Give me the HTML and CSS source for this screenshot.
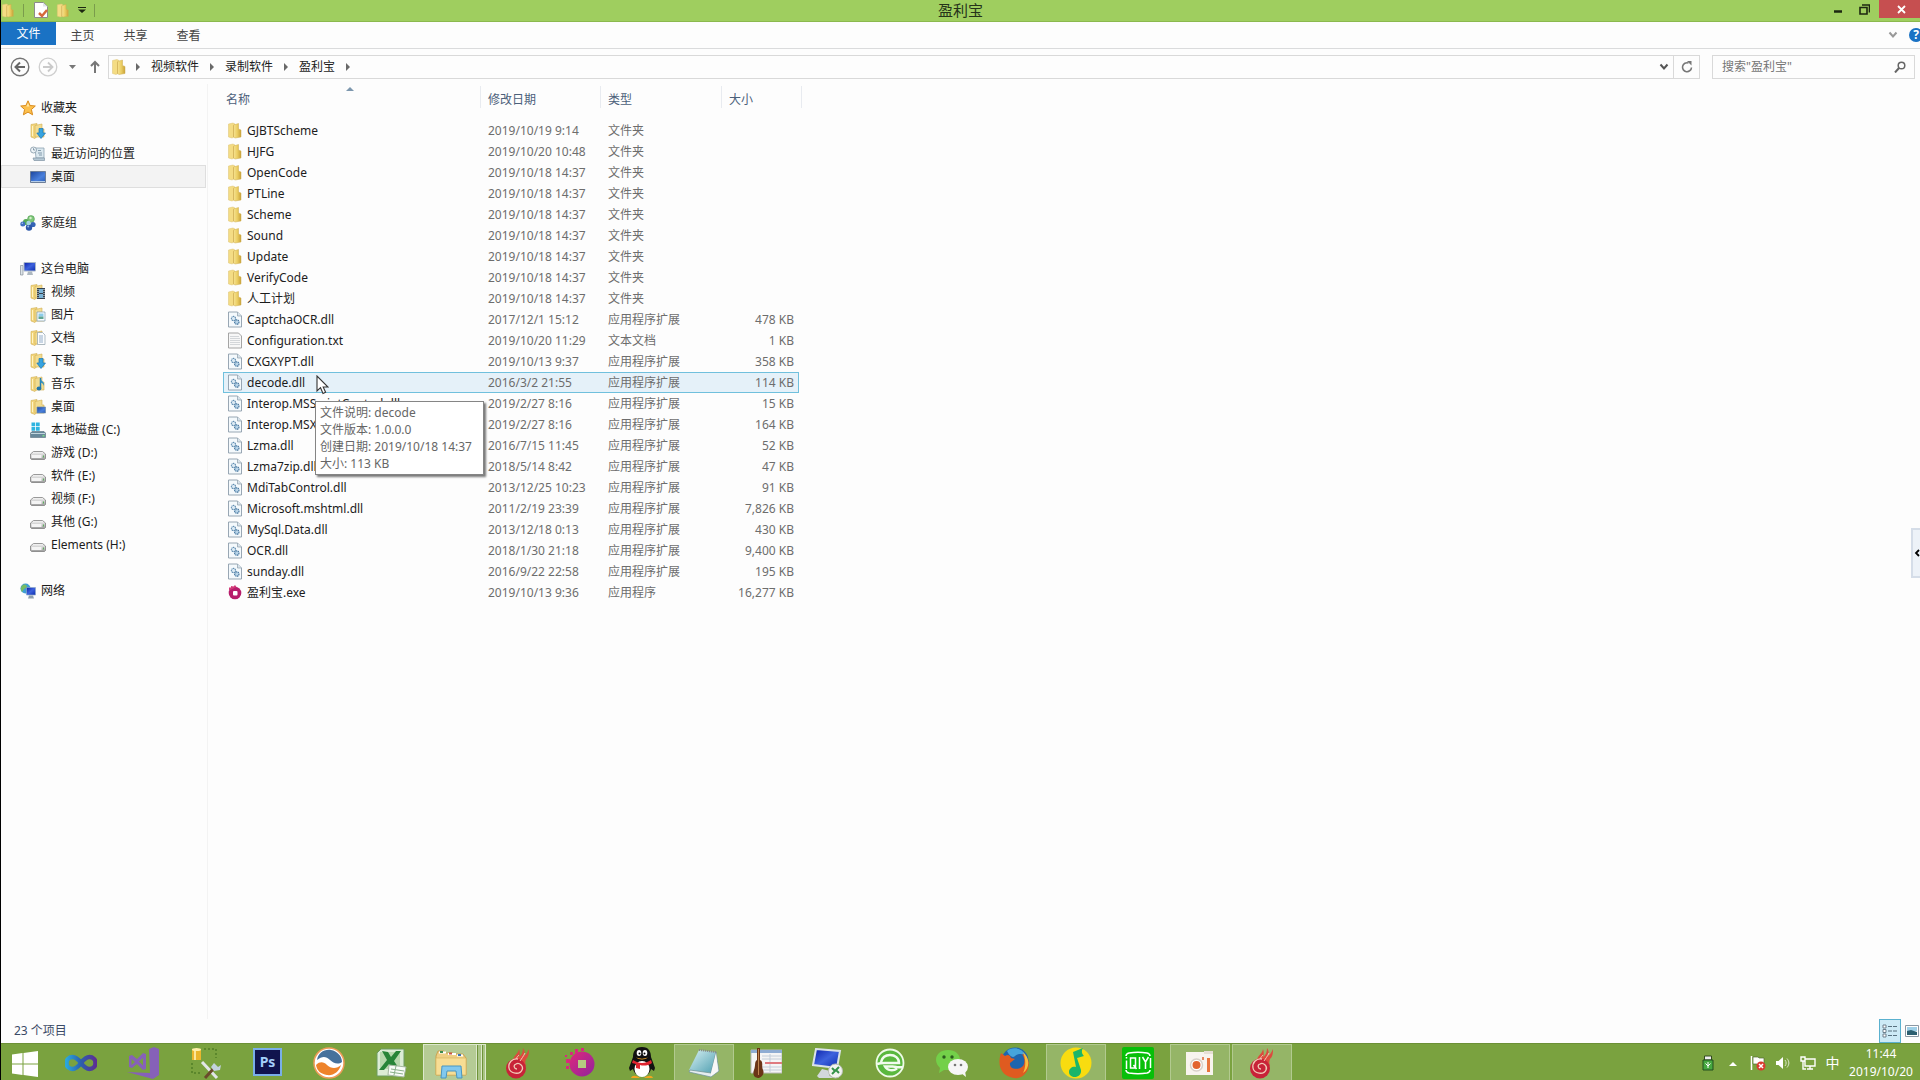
FILE: index.html
```html
<!DOCTYPE html>
<html lang="zh-CN">
<head>
<meta charset="utf-8">
<title>盈利宝</title>
<link rel="stylesheet" href="styles.css">
</head>
<body>
<svg class="defs" aria-hidden="true">
  <defs>
    <linearGradient id="gold" x1="0" x2="1"><stop offset="0" stop-color="#f7e392"/><stop offset=".5" stop-color="#ebce64"/><stop offset="1" stop-color="#c9a238"/></linearGradient>
    <linearGradient id="blueScreen" x1="0" x2="1" y2="1"><stop offset="0" stop-color="#0a1fa8"/><stop offset=".5" stop-color="#3d62dd"/><stop offset="1" stop-color="#0b2cae"/></linearGradient>
    <linearGradient id="deskScreen" x1="0" x2="1" y2="1"><stop offset="0" stop-color="#1b449c"/><stop offset=".6" stop-color="#4a80dc"/><stop offset="1" stop-color="#285cb8"/></linearGradient>
    <linearGradient id="infinity" x1="0" x2="1"><stop offset="0" stop-color="#2aa7dc"/><stop offset=".5" stop-color="#2c5fae"/><stop offset="1" stop-color="#5c2f93"/></linearGradient>
    <linearGradient id="magenta" x1="0" x2="1" y2="1"><stop offset="0" stop-color="#e0287a"/><stop offset="1" stop-color="#8f259e"/></linearGradient>
    <linearGradient id="page" x1="0" x2="1" y2="1"><stop offset="0" stop-color="#d9f1f4"/><stop offset="1" stop-color="#4f9fb0"/></linearGradient>
    <linearGradient id="drive" x1="0" x2="0" y2="1"><stop offset="0" stop-color="#fafafa"/><stop offset="1" stop-color="#9b9b9b"/></linearGradient>
  </defs>
  <symbol id="folder" viewBox="0 0 16 16"><path d="M1.500 1.500L6 .5l2 1V14l-3 1.500-3.500-1z" fill="#f4dc84" stroke="#dcc272" stroke-width=".5"/><path d="M6.500 2.500l5-1.500v5.500l2.500 1v7L8 15.500l-1.500-1z" fill="url(#gold)" stroke="#cfae50" stroke-width=".5"/><path d="M6.500 3v11.500" stroke="#d2b25a" stroke-width=".7"/></symbol>
  <symbol id="wide-folder" viewBox="0 0 16 16"><path d="M1 1.500l6-1v13L5 15.500l-4-1.500z" fill="#f3d67e" stroke="#d0ae52" stroke-width=".6"/><path d="M5 2.500L12 1v5h2v8H5z" fill="#f2dc90" stroke="#d0ae52" stroke-width=".6"/><path d="M2.500 3v10" stroke="#fff4c5"/></symbol>
  <symbol id="folder-down" viewBox="0 0 16 16"><use href="#wide-folder"/><path d="M9 5.500h4V10h2.500L11 15.500 6.800 10H9z" fill="#36a3df" stroke="#1b77b4" stroke-width=".7"/></symbol>
  <symbol id="folder-video" viewBox="0 0 16 16"><use href="#wide-folder"/><path d="M7 4h8v11H7z" fill="#35424f"/><path d="M9 5h4v4H9zM9 10h4v4H9z" fill="#7ab3d6"/><path d="M8 5v10M14 5v10" stroke="#e8eef3" stroke-dasharray="1 1"/></symbol>
  <symbol id="folder-image" viewBox="0 0 16 16"><use href="#wide-folder"/><path d="M7 5h8v9H7z" fill="#f9fdff" stroke="#7d9aac" stroke-width=".7"/><path d="M8.500 6.500h5v3h-5z" fill="#8ccbe9"/><path d="M8.500 9.500h5V12h-5z" fill="#5fa593"/></symbol>
  <symbol id="folder-doc" viewBox="0 0 16 16"><use href="#wide-folder"/><path d="M7.500 2.500h5L15 5v9.500H7.500z" fill="#fbfdff" stroke="#8fa0ae" stroke-width=".7"/><path d="M9 6h4M9 8h4M9 10h4M9 12h4" stroke="#7f9bbb" stroke-width=".8"/></symbol>
  <symbol id="folder-music" viewBox="0 0 16 16"><use href="#wide-folder"/><path d="M10.500 2v10" stroke="#287fb3" stroke-width="1.500"/><path d="M10.500 2c0 3 4.500 3.500 3.500 8-.5-2-1.500-3-3.500-3.500z" fill="#2f90c4"/><ellipse cx="9" cy="12.500" rx="2.400" ry="2" fill="#2476aa"/></symbol>
  <symbol id="folder-desktop" viewBox="0 0 16 16"><use href="#wide-folder"/><path d="M7 8h8.500v6H7z" fill="url(#deskScreen)" stroke="#6f8cab" stroke-width=".7"/></symbol>
  <symbol id="star" viewBox="0 0 16 16"><path d="M8 .8l2.100 4.700 5.200.5-3.900 3.500 1.200 5.300L8 12.100l-4.600 2.700 1.200-5.300L.7 6l5.200-.5z" fill="#fcc04d" stroke="#d98b1c"/><path d="M8 3l1.400 3.400-3 .2z" fill="#ffe7a8"/></symbol>
  <symbol id="recent" viewBox="0 0 16 16"><path d="M5 2h9v10H6z" fill="#dbe8ef" stroke="#8da2b1" stroke-width=".8"/><circle cx="3.500" cy="4" r="3" fill="#eef4f7" stroke="#8296a5" stroke-width=".8"/><path d="M3.500 2.200V4H5M8 4.500h3M8 7h4M9 9h3" stroke="#6d8799" fill="none" stroke-width=".8"/><path d="M3 12h11.500v2.500H4z" fill="#b5c8d4" stroke="#8094a3" stroke-width=".7"/></symbol>
  <symbol id="desktop" viewBox="0 0 16 16"><path d="M.5 2.500h15v11H.5z" fill="url(#deskScreen)" stroke="#6c7e99"/><path d="M1 12.500h14" stroke="#b5cde8"/></symbol>
  <symbol id="homegroup" viewBox="0 0 16 16"><circle cx="6" cy="7" r="3" fill="#54a955"/><circle cx="11" cy="4" r="3.400" fill="#7fc77a" stroke="#4c9a4e" stroke-width=".6"/><circle cx="2.800" cy="9" r="2.500" fill="#3d6fc0"/><circle cx="13" cy="9.500" r="2.600" fill="#3564b5"/><circle cx="9" cy="12.500" r="3.200" fill="#2d58aa"/><circle cx="8.500" cy="8" r="2.200" fill="#a2d6df"/><circle cx="10.500" cy="3" r="1.200" fill="#d7f0cc"/><circle cx="8.200" cy="11.500" r="1" fill="#8fb4e6"/><circle cx="2.300" cy="8.300" r=".8" fill="#a4c4ec"/></symbol>
  <symbol id="pc" viewBox="0 0 16 16"><path d="M.5 4.500h2.500V14H.5z" fill="#dce3e8" stroke="#87919a" stroke-width=".7"/><path d="M4 1.500h11.500v8.500H4z" fill="url(#blueScreen)" stroke="#aab8ca"/><path d="M8 10.500h4l1 3.500H7z" fill="#aeb8c0"/></symbol>
  <symbol id="network" viewBox="0 0 16 16"><circle cx="5.500" cy="5.500" r="5" fill="#3f9ed3"/><path d="M3 2c2-1 4 0 4 2L4 6 2 9C0 6 1 3 3 2z" fill="#77bd64"/><path d="M6.500 4.500h9V12h-9z" fill="url(#blueScreen)" stroke="#8ea8c8" stroke-width=".7"/><path d="M9 12.500h4l1 3H8z" fill="#8fa0ae"/></symbol>
  <symbol id="drive-c" viewBox="0 0 16 16"><path d="M1.500.5h3.700v3.700H1.500zM6 .5h3.700v3.700H6zM1.500 5h3.700v3.700H1.500zM6 5h3.700v3.700H6z" fill="#2fb4e0"/><path d="M2 9.500h12l1.500 1.500v4.500H.5V11z" fill="#68889a" stroke="#597080" stroke-width=".6"/><path d="M1 11.500h14" stroke="#c2d6de"/><path d="M12.500 13h2v1.500h-2z" fill="#7bdc86"/></symbol>
  <symbol id="hdd" viewBox="0 0 16 16"><path d="M3.500 6.500h9l3 2.500v4.500l-1 1h-13l-1-1V9z" fill="url(#drive)" stroke="#808080" stroke-width=".8"/><path d="M1.500 10h10v3h-10z" fill="#f4f4f4"/><path d="M13 10.500h1v2h-1z" fill="#5bb05b"/></symbol>
  <symbol id="dll" viewBox="0 0 16 16"><path d="M1.500.5h9l4 4v11h-13z" fill="#f4f9fc" stroke="#8d9dab" stroke-width=".9"/><path d="M10.500.5v4h4" fill="#d9e4ec" stroke="#8d9dab" stroke-width=".7"/><circle cx="6.500" cy="7" r="2.100" fill="#dceaf4" stroke="#5585ab" stroke-width="1.100" stroke-dasharray="1.200 .5"/><circle cx="9.800" cy="10.600" r="2.200" fill="#b9d5e9" stroke="#3f719b" stroke-width="1.100" stroke-dasharray="1.200 .5"/></symbol>
  <symbol id="txt" viewBox="0 0 16 16"><path d="M1.500.5h10l3 3v12h-13z" fill="#f7f7f7" stroke="#9b9b9b" stroke-width=".9"/><path d="M3 4h9M3 6h10M3 8h10M3 10h10M3 12h10" stroke="#c9cdd0" stroke-width=".8"/></symbol>
  <symbol id="exe" viewBox="0 0 16 16"><circle cx="8" cy="8.500" r="6.300" fill="#b81d6c"/><path d="M2 6l0-3 2 0 0-1.500 2.500.5L8 .5l1.500 2z" fill="#d23a78"/><rect x="6" y="6.500" width="4.500" height="4.500" rx="1" fill="#fff"/></symbol>
  <symbol id="crumb-arrow" viewBox="0 0 6 8"><path d="M1 0l4 4-4 4z" fill="#696969"/></symbol>
  <symbol id="chevron" viewBox="0 0 10 8"><path d="M1.500 1.500L5 5.500l3.500-4" fill="none" stroke="currentColor" stroke-width="2"/></symbol>
  <symbol id="swirl" viewBox="0 0 32 32"><path d="M11 14c0-6 5-6 6-12 1 3 1 5 0 8 3-2 4-5 4-9 2 3 2 5 1 8 2-1 3-3 5-7 0 6-1 8-3 10-1 3-1 4 0 7z" fill="#dd4a3e"/><circle cx="14" cy="21.500" r="10" fill="#c82338"/><path d="M16 12c-6-1-10 4-9 9 1 6 11 7 13 2 2-4-3-8-6-6-3 1-2 5 1 5" fill="none" stroke="#f1c9b6" stroke-width="1.300"/><path d="M18 14c2-3 3-4 5-8M14 12c1-2 2-3 3-4" stroke="#f1c9b6" fill="none"/></symbol>
</svg>

<header class="titlebar">
  <div class="quick">
    <svg class="icon-14"><use href="#folder"/></svg><i class="sep"></i>
    <button aria-label="属性"><svg width="14" height="16" viewBox="0 0 14 16"><path d="M.5.5h9l4 4v11H.5z" fill="#fff" stroke="#8c8c8c"/><path d="M9 .5v4h4.500" fill="#dfe4e8"/><path d="M5 11l3 3 5-6" fill="none" stroke="#d6683b" stroke-width="2.500"/></svg></button>
    <button aria-label="新建文件夹"><svg class="icon-14"><use href="#folder"/></svg></button>
    <button aria-label="自定义"><svg width="8" height="6" viewBox="0 0 8 6"><path d="M0 0h8v1H0zM0 2.500h8L4 6z" fill="#1c2710"/></svg></button><i class="sep"></i>
  </div>
  <h1>盈利宝</h1>
  <div class="controls">
    <button aria-label="最小化"><svg width="10" height="12" viewBox="0 0 10 12"><path d="M1 8.500h8" stroke="#1c2710" stroke-width="2.500"/></svg></button>
    <button aria-label="还原"><svg width="11" height="11" viewBox="0 0 11 11"><path d="M1 3.500h7v6.500H1zM3 1h7.500v7.500" fill="none" stroke="#1c2710" stroke-width="1.600"/></svg></button>
    <button class="close" aria-label="关闭"><svg width="9" height="9" viewBox="0 0 9 9"><path d="M1 1l7 7M8 1L1 8" stroke="#fff" stroke-width="1.800"/></svg></button>
  </div>
</header>

<nav class="ribbon">
  <button class="file">文件</button><button>主页</button><button>共享</button><button>查看</button>
  <span class="ribbon-right">
    <button aria-label="展开功能区"><svg class="chev gray"><use href="#chevron"/></svg></button>
    <button class="help" aria-label="帮助">?</button>
  </span>
</nav>

<div class="location">
  <div class="history">
    <button aria-label="后退"><svg width="20" height="20" viewBox="0 0 20 20"><circle cx="10" cy="10" r="8.800" fill="none" stroke="#757575" stroke-width="1.400"/><path d="M15 10H6M10 5.500L5.500 10l4.500 4.500" fill="none" stroke="#666" stroke-width="2"/></svg></button>
    <button aria-label="前进"><svg width="20" height="20" viewBox="0 0 20 20"><circle cx="10" cy="10" r="8.800" fill="none" stroke="#cfcfcf" stroke-width="1.300"/><path d="M5 10h9M10 5.500l4.500 4.500-4.500 4.500" fill="none" stroke="#cacaca" stroke-width="1.800"/></svg></button>
    <button class="recent" aria-label="最近位置"><svg width="7" height="4" viewBox="0 0 7 4"><path d="M0 0h7L3.500 4z" fill="#777"/></svg></button>
    <button class="up" aria-label="上移"><svg width="10" height="13" viewBox="0 0 10 13"><path d="M5 13V2M1 6l4-4 4 4" fill="none" stroke="#777" stroke-width="2"/></svg></button>
  </div>
  <div class="address">
    <svg class="icon-16"><use href="#folder"/></svg>
    <svg class="crumb-arrow"><use href="#crumb-arrow"/></svg><a href="#">视频软件</a>
    <svg class="crumb-arrow"><use href="#crumb-arrow"/></svg><a href="#">录制软件</a>
    <svg class="crumb-arrow"><use href="#crumb-arrow"/></svg><a href="#">盈利宝</a>
    <svg class="crumb-arrow"><use href="#crumb-arrow"/></svg>
    <button class="drop" aria-label="历史"><svg class="chev"><use href="#chevron"/></svg></button>
    <button class="refresh" aria-label="刷新"><svg width="12" height="12" viewBox="0 0 12 12"><path d="M10.500 6.500A4.500 4.500 0 1 1 7.500 2" fill="none" stroke="#777" stroke-width="1.600"/><path d="M6 0h4.500v4.500z" fill="#777"/></svg></button>
  </div>
  <label class="search"><input type="search" aria-label="搜索" placeholder='搜索"盈利宝"'><svg width="12" height="12" viewBox="0 0 12 12"><circle cx="7.500" cy="4.500" r="3.300" fill="none" stroke="#666" stroke-width="1.500"/><path d="M5 7l-4 4.500" stroke="#666" stroke-width="2"/></svg></label>
</div>

<div class="panes">
  <nav class="tree">
    <ul>
      <li><a href="#"><svg><use href="#star"/></svg>收藏夹</a></li>
      <li class="sub"><a href="#"><svg><use href="#folder-down"/></svg>下载</a></li>
      <li class="sub"><a href="#"><svg><use href="#recent"/></svg>最近访问的位置</a></li>
      <li class="sub current"><a href="#"><svg><use href="#desktop"/></svg>桌面</a></li>
    </ul>
    <ul><li><a href="#"><svg><use href="#homegroup"/></svg>家庭组</a></li></ul>
    <ul>
      <li><a href="#"><svg><use href="#pc"/></svg>这台电脑</a></li>
      <li class="sub"><a href="#"><svg><use href="#folder-video"/></svg>视频</a></li>
      <li class="sub"><a href="#"><svg><use href="#folder-image"/></svg>图片</a></li>
      <li class="sub"><a href="#"><svg><use href="#folder-doc"/></svg>文档</a></li>
      <li class="sub"><a href="#"><svg><use href="#folder-down"/></svg>下载</a></li>
      <li class="sub"><a href="#"><svg><use href="#folder-music"/></svg>音乐</a></li>
      <li class="sub"><a href="#"><svg><use href="#folder-desktop"/></svg>桌面</a></li>
      <li class="sub"><a href="#"><svg><use href="#drive-c"/></svg>本地磁盘 (C:)</a></li>
      <li class="sub"><a href="#"><svg><use href="#hdd"/></svg>游戏 (D:)</a></li>
      <li class="sub"><a href="#"><svg><use href="#hdd"/></svg>软件 (E:)</a></li>
      <li class="sub"><a href="#"><svg><use href="#hdd"/></svg>视频 (F:)</a></li>
      <li class="sub"><a href="#"><svg><use href="#hdd"/></svg>其他 (G:)</a></li>
      <li class="sub"><a href="#"><svg><use href="#hdd"/></svg>Elements (H:)</a></li>
    </ul>
    <ul><li><a href="#"><svg><use href="#network"/></svg>网络</a></li></ul>
  </nav>
  <main class="files">
    <table>
      <colgroup><col class="c-name"><col class="c-date"><col class="c-type"><col class="c-size"></colgroup>
      <thead><tr><th class="sorted">名称</th><th>修改日期</th><th>类型</th><th>大小</th></tr></thead>
      <tbody>
        <tr><td><svg><use href="#folder"/></svg>GJBTScheme</td><td>2019/10/19 9:14</td><td>文件夹</td><td></td></tr>
        <tr><td><svg><use href="#folder"/></svg>HJFG</td><td>2019/10/20 10:48</td><td>文件夹</td><td></td></tr>
        <tr><td><svg><use href="#folder"/></svg>OpenCode</td><td>2019/10/18 14:37</td><td>文件夹</td><td></td></tr>
        <tr><td><svg><use href="#folder"/></svg>PTLine</td><td>2019/10/18 14:37</td><td>文件夹</td><td></td></tr>
        <tr><td><svg><use href="#folder"/></svg>Scheme</td><td>2019/10/18 14:37</td><td>文件夹</td><td></td></tr>
        <tr><td><svg><use href="#folder"/></svg>Sound</td><td>2019/10/18 14:37</td><td>文件夹</td><td></td></tr>
        <tr><td><svg><use href="#folder"/></svg>Update</td><td>2019/10/18 14:37</td><td>文件夹</td><td></td></tr>
        <tr><td><svg><use href="#folder"/></svg>VerifyCode</td><td>2019/10/18 14:37</td><td>文件夹</td><td></td></tr>
        <tr><td><svg><use href="#folder"/></svg>人工计划</td><td>2019/10/18 14:37</td><td>文件夹</td><td></td></tr>
        <tr><td><svg><use href="#dll"/></svg>CaptchaOCR.dll</td><td>2017/12/1 15:12</td><td>应用程序扩展</td><td>478 KB</td></tr>
        <tr><td><svg><use href="#txt"/></svg>Configuration.txt</td><td>2019/10/20 11:29</td><td>文本文档</td><td>1 KB</td></tr>
        <tr><td><svg><use href="#dll"/></svg>CXGXYPT.dll</td><td>2019/10/13 9:37</td><td>应用程序扩展</td><td>358 KB</td></tr>
        <tr class="hover"><td><svg><use href="#dll"/></svg>decode.dll
          <div class="tooltip" role="tooltip">文件说明: decode<br>文件版本: 1.0.0.0<br>创建日期: 2019/10/18 14:37<br>大小: 113 KB</div>
          <svg class="pointer" viewBox="0 0 13 20"><path d="M1 1v15l3.500-3.300L7 18.500l2.600-1.200L7.200 12H12z" fill="#fff" stroke="#333" stroke-width="1.100"/></svg></td><td>2016/3/2 21:55</td><td>应用程序扩展</td><td>114 KB</td></tr>
        <tr><td><svg><use href="#dll"/></svg>Interop.MSScriptControl.dll</td><td>2019/2/27 8:16</td><td>应用程序扩展</td><td>15 KB</td></tr>
        <tr><td><svg><use href="#dll"/></svg>Interop.MSXML2.dll</td><td>2019/2/27 8:16</td><td>应用程序扩展</td><td>164 KB</td></tr>
        <tr><td><svg><use href="#dll"/></svg>Lzma.dll</td><td>2016/7/15 11:45</td><td>应用程序扩展</td><td>52 KB</td></tr>
        <tr><td><svg><use href="#dll"/></svg>Lzma7zip.dll</td><td>2018/5/14 8:42</td><td>应用程序扩展</td><td>47 KB</td></tr>
        <tr><td><svg><use href="#dll"/></svg>MdiTabControl.dll</td><td>2013/12/25 10:23</td><td>应用程序扩展</td><td>91 KB</td></tr>
        <tr><td><svg><use href="#dll"/></svg>Microsoft.mshtml.dll</td><td>2011/2/19 23:39</td><td>应用程序扩展</td><td>7,826 KB</td></tr>
        <tr><td><svg><use href="#dll"/></svg>MySql.Data.dll</td><td>2013/12/18 0:13</td><td>应用程序扩展</td><td>430 KB</td></tr>
        <tr><td><svg><use href="#dll"/></svg>OCR.dll</td><td>2018/1/30 21:18</td><td>应用程序扩展</td><td>9,400 KB</td></tr>
        <tr><td><svg><use href="#dll"/></svg>sunday.dll</td><td>2016/9/22 22:58</td><td>应用程序扩展</td><td>195 KB</td></tr>
        <tr><td><svg><use href="#exe"/></svg>盈利宝.exe</td><td>2019/10/13 9:36</td><td>应用程序</td><td>16,277 KB</td></tr>
      </tbody>
    </table>
  </main>
</div>

<div class="status">
  <span>23 个项目</span>
  <div class="views">
    <button class="on" aria-label="详细信息"><svg width="16" height="14" viewBox="0 0 16 14"><path d="M1 1h3v3H1zM1 5.500h3v3H1zM1 10h3v3H1z" fill="#fff" stroke="#6e7f8c"/><path d="M6 2.500h10M6 7h10M6 11.500h10" stroke="#58707f" stroke-dasharray="4 1"/></svg></button>
    <button aria-label="大图标"><svg width="14" height="12" viewBox="0 0 14 12"><path d="M.5.500h13v11H.5z" fill="#fff" stroke="#8b98a3"/><path d="M2 2h10v4H2z" fill="#9fd0e8"/><path d="M2 6l4-1 6 2v3H2z" fill="#2c5f70"/></svg></button>
  </div>
</div>

<footer class="taskbar">
  <button class="start" aria-label="开始"><svg width="26" height="26" viewBox="0 0 26 26"><path d="M0 3.500L10.500 2v10.500H0zM11.500 1.900L26 0v12.500H11.500zM0 13.500h10.500V24L0 22.500zM11.500 13.500H26V26l-14.500-1.900z" fill="#fff"/></svg></button>
  <div class="apps">
    <button aria-label="Visual Studio"><svg viewBox="0 0 32 32"><path d="M16 16c-3-4-5-6-8.500-6a6 6 0 0 0 0 12c3.500 0 5.500-2 8.500-6s5-6 8.500-6a6 6 0 0 1 0 12c-3.500 0-5.500-2-8.500-6z" fill="none" stroke="url(#infinity)" stroke-width="4.500"/></svg></button>
    <button aria-label="Visual Studio 2012"><svg viewBox="0 0 32 32"><path d="M22 2l5-2 5 2v26l-6 4L0 25l23 1zM2 9l3-1 5 4 6-6 3 1v15l-3 1-6-6-5 4-3-1zm2.500 3v6l3.500-3zm11.500-1l-4 3.500 4 4z" fill="#8661b8" fill-rule="evenodd"/></svg></button>
    <button aria-label="SQL"><svg viewBox="0 0 32 32"><path d="M3 2h9v11H3z" fill="#e9b62d"/><path d="M5 3h2v10H5z" fill="#fbe79a"/><ellipse cx="7.500" cy="2.500" rx="4.500" ry="1.500" fill="#fff0a8"/><path d="M15 2h12v9M3 16v10h10" fill="none" stroke="#3d6c1b" stroke-dasharray="2 2"/><path d="M13 15l15 16" stroke="#e2e6e8" stroke-width="3"/><path d="M16 31l10-11" stroke="#6a4b2b" stroke-width="3"/><path d="M25 16l4 4 3-2-1 5-6 1-3-4z" fill="#c3d2dd"/></svg></button>
    <button aria-label="Photoshop"><svg viewBox="0 0 32 32"><path d="M3 2h27v26H3z" fill="#10144e" stroke="#79aee8" stroke-width="2"/><text x="16.500" y="20" class="ps" text-anchor="middle">Ps</text></svg></button>
    <button aria-label="浏览器"><svg viewBox="0 0 32 32"><circle cx="16" cy="16" r="15" fill="#fff" stroke="#ee9c58" stroke-width="1.500"/><path d="M4 13C5 6 11 2 18 3c6 1 11 6 11 12-4 3-9 1-12-2-4-4-8-4-13 0z" fill="#46719c"/><path d="M3 18c4-4 8-3 11 0 4 4 10 4 14 0-2 7-8 11-14 10S4 24 3 18z" fill="#ee832b"/></svg></button>
    <button aria-label="Excel"><svg viewBox="0 0 32 32"><path d="M6 2h23v27H2V6z" fill="#dcecd5" stroke="#6c9c62"/><path d="M5 5h20v17H5z" fill="#b7d8ac"/><path d="M7 4l6 1 3 5 5-6h5l-7 10 6 9h-7l-4-6-5 6H4l8-10z" fill="#278437"/><path d="M14 18l17 2-2 10-16-2z" fill="#f8fbf7" stroke="#a5b7a0"/><path d="M16 22l13 2M15 25l13 2M21 19l-2 9" stroke="#8ab08a"/></svg></button>
    <button class="active stacked" aria-label="文件资源管理器"><svg viewBox="0 0 32 32"><path d="M1 9l2-5h6l1 2h8l1 1h9l3 4v17H1z" fill="#efcf83" stroke="#c9a252"/><path d="M4 5.500h7M13 7h8M22 8.500h6" stroke="#fff" stroke-width="2"/><path d="M5 5h3" stroke="#3b8c50" stroke-width="2"/><path d="M14 6.500h3" stroke="#c85645" stroke-width="2"/><path d="M23 8h3" stroke="#3b76b5" stroke-width="2"/><path d="M1 11h30v17H1z" fill="#f7dd94" stroke="#d9b560" stroke-width=".7"/><path d="M6 31l1-12h19l1 12h-5l-1-7h-9l-1 7z" fill="#81c8ee" stroke="#4a96bf"/></svg></button>
    <button aria-label="录屏"><svg viewBox="0 0 32 32"><use href="#swirl"/></svg></button>
    <button aria-label="盈利宝"><svg viewBox="0 0 32 32"><circle cx="18" cy="17" r="12.500" fill="url(#magenta)"/><rect x="14" y="13" width="8" height="8" fill="#b5ca80"/><path d="M2 12h4v4H2zM6 5h3v3H6zM11 2h3v4h-3zM1 8h2v2H1zM17 1h3v3h-3zM2 19h3v3H2z" fill="#d9297e"/></svg></button>
    <button aria-label="QQ"><svg viewBox="0 0 32 32"><path d="M16 0c7 0 9 5 9 10l4 11-1 3-3-2c-1 4-4 7-9 7s-8-3-9-7l-3 2-1-3 4-11c0-5 2-10 9-10z" fill="#111"/><ellipse cx="16" cy="22" rx="7.500" ry="8" fill="#fff"/><ellipse cx="13" cy="6" rx="2.300" ry="3" fill="#fff"/><ellipse cx="19" cy="6" rx="2.300" ry="3" fill="#fff"/><circle cx="13.500" cy="6.500" r="1"/><circle cx="18.500" cy="6.500" r="1"/><path d="M10 10.500c4 1.500 8 1.500 12 0-3 2.500-9 2.500-12 0z" fill="#f5a623"/><path d="M7 13c6 4 12 4 18 0l1 3c-4 3-9 3-12 2v4l-4-1v-4l-4-1z" fill="#df2430"/><path d="M5 31c1-3 5-3 9 0zM18 31c4-3 8-3 9 0z" fill="#f3a51f"/></svg></button>
    <button class="active" aria-label="记事本"><svg viewBox="0 0 32 32"><path d="M11 3l17 2-5 21-22-3z" fill="url(#page)"/><path d="M28 5l3 19-8 6-22-5 1-2 21 3z" fill="#e5edef" stroke="#6b9099" stroke-width=".7"/><path d="M23 26l5-20 2 18-7 5z" fill="#f7f7f7"/><path d="M11 3l17 2" stroke="#888" stroke-dasharray="1 1" stroke-width="2"/></svg></button>
    <button aria-label="乐谱"><svg viewBox="0 0 32 32"><path d="M1 3h31v23H1z" fill="#f5f5f5" stroke="#bbb"/><path d="M1 3h31v3H1z" fill="#8fadd3"/><path d="M12 9h20M12 12h20M12 20h20M12 23h20M20 7v18" stroke="#c3ced9"/><path d="M15 16h17" stroke="#df7a7e" stroke-width="2"/><path d="M7 1h3v12c4 2 1 6 3 10s-2 8-5 8-6-3-4-8 0-8 3-10z" fill="#6b3517"/><path d="M8.500 2v26" stroke="#c08550"/></svg></button>
    <button aria-label="远程桌面"><svg viewBox="0 0 32 32"><path d="M4 2l24 2-3 17-24-3z" fill="url(#blueScreen)" stroke="#dbe3e8" stroke-width="2"/><path d="M10 22l8 2-1 4 4 3H7l-2-2z" fill="#d2d8db"/><circle cx="23.500" cy="24" r="7" fill="#f2f4f1" stroke="#b9beb7"/><path d="M20 21l3 3-3 3M27 20l-3 3 3 3" fill="none" stroke="#35924a" stroke-width="2"/></svg></button>
    <button aria-label="360浏览器"><svg viewBox="0 0 32 32"><circle cx="16" cy="16" r="13.500" fill="#5ab83f" stroke="#effbe9" stroke-width="1.800"/><path d="M3 17c3-1 5-1 8-1h14c0-5-4-8-9-8s-8 3-9 7M29 20c-4 1-7 0-10-.500h-8c2 4 8 5 12 2" fill="none" stroke="#f2fbee" stroke-width="2.500"/></svg></button>
    <button aria-label="微信"><svg viewBox="0 0 32 32"><path d="M12 3c7 0 12 4 12 10s-5 10-12 10l-4 0-5 3 1-5c-2-2-4-5-4-8C0 7 5 3 12 3z" fill="#73d049"/><ellipse cx="22" cy="20" rx="10" ry="8" fill="#f6f6f6"/><path d="M25 26l5 4-1-6z" fill="#f6f6f6"/><circle cx="8" cy="10" r="1.700" fill="#2b5d1e"/><circle cx="16" cy="10" r="1.700" fill="#2b5d1e"/><circle cx="19" cy="18" r="1.300" fill="#777"/><circle cx="25" cy="18" r="1.300" fill="#777"/></svg></button>
    <button aria-label="Firefox"><svg viewBox="0 0 32 32"><circle cx="17" cy="14" r="13.500" fill="#1e65ae"/><path d="M9 4c4-4 15-4 18 4-4-2-8-1-10 1s-5 1-8-5z" fill="#46a5dc"/><path d="M3 6l4 3c3-2 5-1 6 2l4 1-5 4c-1 6 8 8 13 3 2-3 2-8-1-12 7 3 8 9 6 15-3 8-11 11-18 8C3 27-1 18 3 6z" fill="#df5b20"/><path d="M25 5c7 6 7 16 0 21 3-6 3-13 0-21z" fill="#f8bd3f"/></svg></button>
    <button class="active" aria-label="QQ音乐"><svg viewBox="0 0 32 32"><circle cx="16" cy="16" r="15.500" fill="#f8dc10"/><path d="M13 5l10-4c-2 3-1 6 1 8l-7 2 4 12c1 9-12 9-12 2 0-4 4-6 7-5z" fill="#1bb56a"/></svg></button>
    <button aria-label="爱奇艺"><svg viewBox="0 0 32 32"><rect width="32" height="32" rx="2" fill="#08bf09"/><path d="M4 9c0-2 1-2.500 3-3 6-1 12-1 18 0 2 .5 3 1 3 3M4 23c0 2 1 2.500 3 3 6 1 12 1 18 0 2-.5 3-1 3-3M4.500 10v1.500M4.500 13.500V22M8.500 11h5v10h-5zM11.500 18l3 4M17.500 10v12M20.500 10l3 5 3-5M23.500 15v7M28.500 11v10" fill="none" stroke="#fff" stroke-width="1.500"/></svg></button>
    <button class="active" aria-label="屏幕录像"><svg viewBox="0 0 32 32"><path d="M2 5h18V4h9v24H2z" fill="#f8f4ee"/><path d="M20 4h9v3h-9z" fill="#e7dfd5"/><circle cx="12.500" cy="18" r="6" fill="#fff" stroke="#d8d0c8" stroke-width="1.500"/><circle cx="12.500" cy="18" r="4" fill="#e2632f"/><path d="M18 10h2v3h-2z" fill="#e58a62"/><path d="M23 11h3v14h-3z" fill="#e9743c"/></svg></button>
    <button class="active" aria-label="录屏窗口"><svg viewBox="0 0 32 32"><use href="#swirl"/></svg></button>
  </div>
  <div class="tray">
    <button aria-label="USB"><svg width="12" height="16" viewBox="0 0 12 16"><path d="M2.500 1h7v4h-7z" fill="#eee" stroke="#334b1f"/><path d="M1 5h10v10H1z" fill="#45a840" stroke="#234e1e"/><path d="M6 7v6M3.500 8.500L6 11l2.500-2.500" stroke="#fff" fill="none"/></svg></button>
    <button aria-label="显示隐藏图标"><svg width="8" height="5" viewBox="0 0 8 5"><path d="M0 5l4-4 4 4z" fill="#fff"/></svg></button>
    <button aria-label="操作中心"><svg width="16" height="16" viewBox="0 0 16 16"><path d="M1.500 1v14" stroke="#fff" stroke-width="1.500"/><path d="M3 2h5l1 1h5v7H8L7 9H3z" fill="#fff" stroke="#526b31" stroke-width=".7"/><circle cx="11" cy="11" r="4.500" fill="#d93a30"/><path d="M9 9l4 4m0-4l-4 4" stroke="#fff" stroke-width="1.500"/></svg></button>
    <button aria-label="音量"><svg width="15" height="14" viewBox="0 0 15 14"><path d="M1 5h2.500L8 1v12L3.500 9H1z" fill="#fff"/><path d="M10 4c1.500 2 1.500 4 0 6M12 2.500c2.500 3 2.500 6 0 9" fill="none" stroke="#dce8c9"/></svg></button>
    <button aria-label="网络"><svg width="16" height="14" viewBox="0 0 16 14"><path d="M5 3h10v7H5zM7 13h6M10 10v3M1 1h4v4H1zM3 5v8h3" fill="none" stroke="#fff" stroke-width="1.400"/></svg></button>
    <button class="ime">中</button>
    <button class="clock"><time>11:44<br>2019/10/20</time></button>
  </div>
</footer>

<button class="side-handle" aria-label="展开侧栏"><svg width="6" height="8" viewBox="0 0 6 8"><path d="M5 1L2 4l3 3" fill="none" stroke="#000" stroke-width="1.800"/></svg></button>
</body>
</html>
```
FILE: styles.css
```css
* { box-sizing: border-box; }

body {
  margin: 0;
  min-height: 100vh;
  display: flex;
  flex-direction: column;
  position: relative;
  overflow: hidden;
  border-left: 1px solid #000;
  background: #fdfdfd;
  color: #1c1c1c;
  font: 12px/18px "Noto Sans", "Noto Sans CJK SC", sans-serif;
}

button {
  padding: 0;
  border: 0;
  background: none;
  color: inherit;
  font: inherit;
  display: flex;
  align-items: center;
  justify-content: center;
}

a { color: inherit; text-decoration: none; }
svg { display: block; flex: none; }
.defs { position: absolute; width: 0; height: 0; }
.icon-14 { width: 14px; height: 15px; }
.icon-16 { width: 16px; height: 16px; }

/* Title bar */
.titlebar {
  display: grid;
  grid-template-columns: 1fr auto 1fr;
  height: 22px;
  background: #9fce5f;
  border-bottom: 1px solid #8bb94e;
}
.titlebar h1 { margin: 0; font-size: 15px; font-weight: 400; line-height: 21px; color: #26331a; }
.quick { display: flex; align-items: center; gap: 8px; height: 20px; }
.sep { width: 1px; height: 13px; background: #7a9c4c; }
.quick .sep:first-of-type { margin-right: 2px; }
.controls { display: flex; justify-content: flex-end; height: 18px; }
.controls button { width: 27px; }
.controls .close { width: 41px; margin-left: 1px; padding-left: 4px; background: #c64f50; }

/* Ribbon tabs */
.ribbon { display: flex; height: 27px; border-bottom: 1px solid #dadbdc; color: #444; }
.ribbon > button { width: 53px; height: 27px; }
.ribbon > .file { width: 55px; height: 23px; background: #1a72c4; color: #fff; }
.ribbon-right { display: flex; align-items: center; gap: 11px; margin-left: auto; margin-right: -3px; }
.help { width: 14px; height: 14px; border-radius: 50%; background: #1a72c4; color: #fff; font-weight: 700; }
.chev { width: 10px; height: 8px; color: #555; }
.gray { color: #999; }

/* Address row */
.location { display: flex; align-items: center; height: 35px; padding: 0 5px 0 9px; }
.history { display: flex; align-items: center; width: 98px; }
.history button + button { margin-left: 8px; }
.history .up { margin-left: 14px; }
.history .recent { margin-left: 11px; }
.address { display: flex; flex: 1; align-items: center; height: 24px; border: 1px solid #d9d9d9; }
.address .icon-16 { margin: 0 8px 0 2px; }
.crumb-arrow { width: 6px; height: 8px; margin: 0 10px; }
.address .icon-16 + .crumb-arrow { margin: 0 10px 0 0; }
.drop { width: 18px; height: 22px; margin-left: auto; }
.refresh { width: 26px; height: 22px; border-left: 1px solid #d9d9d9; }
.search { display: flex; align-items: center; width: 203px; height: 24px; margin-left: 12px; padding: 0 8px 0 9px; border: 1px solid #d9d9d9; }
.search input { flex: 1; min-width: 0; padding: 0; border: 0; outline: 0; background: none; font: inherit; }
.search input::placeholder { color: #767676; opacity: 1; }

/* Panes */
.panes { display: flex; flex: 1; }
.tree { width: 207px; padding-top: 12px; border-right: 1px solid #f3f3f3; }
.tree ul { margin: 0 0 23px; padding: 0; list-style: none; }
.tree a { display: flex; align-items: center; gap: 5px; height: 23px; padding-left: 19px; }
.tree svg { width: 16px; height: 16px; }
.tree .sub a { padding-left: 29px; }
.tree .current { margin-right: 1px; }
.tree .current a { background: #f3f3f3; box-shadow: inset 0 0 0 1px #dedede; }

.files { flex: 1; padding: 2px 0 0 15px; }
.files table { width: 576px; table-layout: fixed; border-collapse: separate; border-spacing: 0; }
.c-name { width: 258px; }
.c-date { width: 120px; }
.c-type { width: 121px; }
.c-size { width: 77px; }
.files th {
  position: relative;
  height: 34px;
  padding: 0 0 0 7px;
  color: #4c607a;
  font-weight: 400;
  line-height: 28px;
  text-align: left;
  vertical-align: top;
}
.files th:first-child { padding-left: 3px; }
.files th::after { content: ""; position: absolute; top: 0; right: 0; width: 1px; height: 22px; background: #e8ebf0; }
.files th:last-child::after { right: -3px; }
.sorted::before { content: ""; position: absolute; top: 1px; left: 123px; border: 4px solid transparent; border-top: 0; border-bottom-color: #7d97ae; }
.files td {
  height: 21px;
  padding: 0 0 0 7px;
  border: 0 solid transparent;
  border-width: 1px 0;
  line-height: 19px;
  color: #6d6d6d;
  white-space: nowrap;
}
.files td:first-child { position: relative; padding-left: 23px; border-left-width: 1px; color: #1c1c1c; }
.files td:first-child > svg:first-child { position: absolute; left: 3px; top: 1px; width: 16px; height: 17px; }
.files td:last-child { padding-right: 4px; border-right-width: 1px; text-align: right; }
.files .hover td { background: #e5f1f9; border-color: #70c0dd; }

.tooltip {
  position: absolute;
  z-index: 2;
  left: 91px;
  top: 28px;
  width: 169px;
  padding: 2px 0 2px 4px;
  border: 1px solid #858585;
  background: #fff;
  box-shadow: 2px 2px 2px #777;
  color: #666;
  line-height: 17px;
}
.pointer { position: absolute; z-index: 3; left: 92px; top: 2px; width: 13px; height: 20px; }

/* Status bar */
.status { display: flex; align-items: center; justify-content: space-between; height: 24px; padding-left: 13px; color: #3b4a66; }
.views { display: flex; align-items: center; gap: 4px; height: 24px; padding-right: 1px; }
.views .on { width: 22px; height: 24px; border: 1px solid #5ab1cf; background: #cdeaf6; }

/* Taskbar */
.taskbar { display: flex; height: 37px; background: #7aa23f; border-top: 1px solid #6c9036; }
.start { width: 48px; padding-top: 3px; }
.apps { display: flex; gap: 2px; margin-left: 2px; }
.apps button { width: 60px; height: 36px; border: 1px solid transparent; border-bottom: 0; }
.apps svg { width: 32px; height: 32px; }
.apps .active { background: #95b567; border-color: #b2ca8f; }
.apps .stacked { width: 63px; padding-right: 8px; background: linear-gradient(90deg, #b5cb95 52px, #dce8cc 52px 53px, #6f9339 53px 54px, #a9c485 54px 57px, #dce8cc 57px 58px, #6f9339 58px 59px, #a9c485 59px); border-color: #dce8cc; }
.ps { fill: #a4d0fa; font: 700 14px "Noto Sans", sans-serif; }
.tray { display: flex; align-items: center; margin-left: auto; padding-right: 3px; color: #fff; }
.tray button { width: 25px; height: 36px; padding-top: 2px; }
.tray .ime { font-size: 14px; }
.tray .clock { width: 72px; line-height: 18px; }

.side-handle { position: absolute; right: 0; top: 528px; width: 9px; height: 50px; border: 2px solid #d5dde8; border-right: 0; background: #edf2f8; justify-content: flex-end; }
```
